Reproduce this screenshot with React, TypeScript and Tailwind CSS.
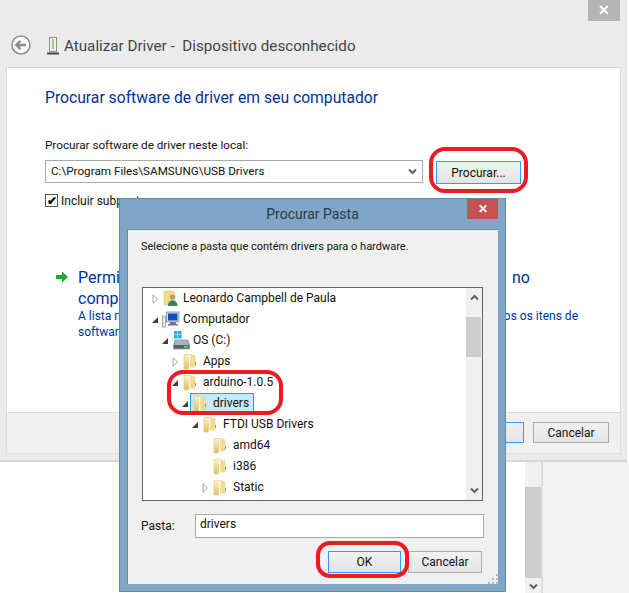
import React from "react";

const FONT = "font-['Roboto','Noto_Sans',sans-serif]";

function Folder() {
  return (
    <svg width="16" height="17" viewBox="0 0 16 17" className="shrink-0">
      <defs>
        <linearGradient id="fg" x1="0" y1="0" x2="0" y2="1">
          <stop offset="0" stopColor="#fdf3c4" />
          <stop offset="1" stopColor="#e3bf63" />
        </linearGradient>
      </defs>
      <path d="M1 1.5h7l4 1.5v11H6l-1 2H1z" fill="url(#fg)" stroke="#e2c87e" strokeWidth="0.6" />
      <path d="M6 2.5l1.5-1v13.2L6 16z" fill="#fffbe6" />
      <path d="M7.5 2.5H12V14H7.5z" fill="#f3da8c" />
      <rect x="12" y="9" width="1" height="3" fill="#5aa7e0" />
    </svg>
  );
}

function UserFolder() {
  return (
    <svg width="16" height="17" viewBox="0 0 16 17" className="shrink-0">
      <path d="M1 1h8l3 1.5V15H1z" fill="#f2d988" stroke="#e2c87e" strokeWidth="0.6" />
      <circle cx="9.5" cy="7" r="2.6" fill="#b89a78" />
      <path d="M5 16c0-4 2-5.5 4.5-5.5S14.500 12 14.500 16z" fill="#3f7f68" />
    </svg>
  );
}

function Computer() {
  return (
    <svg width="18" height="17" viewBox="0 0 18 17" className="shrink-0">
      <rect x="0.500" y="5" width="3" height="11" fill="#e8e8e8" stroke="#8a8a8a" strokeWidth="0.7" />
      <rect x="4.500" y="1" width="12.500" height="10" fill="#d8dde2" stroke="#77828c" strokeWidth="0.7" />
      <rect x="6" y="2.500" width="9.500" height="7" fill="#0b4fc4" />
      <path d="M8 11h6v2h2v1.500H6V13h2z" fill="#70777f" />
    </svg>
  );
}

function Drive() {
  return (
    <svg width="17" height="19" viewBox="0 0 17 19" className="shrink-0">
      <rect x="1" y="0" width="3.500" height="3.500" fill="#12b5ee" />
      <rect x="5" y="0" width="3.500" height="3.500" fill="#12b5ee" />
      <rect x="1" y="4" width="3.500" height="3.500" fill="#12b5ee" />
      <rect x="5" y="4" width="3.500" height="3.500" fill="#12b5ee" />
      <path d="M2 9h13l1.500 5v4H.5v-4z" fill="#a9b2ba" stroke="#6c757d" strokeWidth="0.6" />
      <rect x="1" y="14" width="15" height="3.500" fill="#56606a" />
      <rect x="11" y="15" width="4" height="1.500" fill="#5fe06a" />
    </svg>
  );
}

function OpenArrow() {
  return (
    <svg width="8" height="8" viewBox="0 0 8 8" className="shrink-0">
      <path d="M7 1v6H1z" fill="#404040" />
    </svg>
  );
}

function ClosedArrow() {
  return (
    <svg width="8" height="10" viewBox="0 0 8 10" className="shrink-0">
      <path d="M2 .8 6.500 5 2 9.200z" fill="#fff" stroke="#a6a6a6" />
    </svg>
  );
}

function Chevron({ up }: { up?: boolean }) {
  return (
    <svg width="9" height="7" viewBox="0 0 9 7" className="shrink-0">
      <path d={up ? "M1 5.500 4.500 2 8 5.500" : "M1 1.500 4.500 5 8 1.500"} fill="none" stroke="#606060" strokeWidth="2" />
    </svg>
  );
}

type Row = {
  label: string;
  pad: string;
  arrow?: "open" | "closed";
  icon: "folder" | "user" | "pc" | "drive";
  selected?: boolean;
};

const rows: Row[] = [
  { label: "Leonardo Campbell de Paula", pad: "pl-[8px]", arrow: "closed", icon: "user" },
  { label: "Computador", pad: "pl-[8px]", arrow: "open", icon: "pc" },
  { label: "OS (C:)", pad: "pl-[18px]", arrow: "open", icon: "drive" },
  { label: "Apps", pad: "pl-[28px]", arrow: "closed", icon: "folder" },
  { label: "arduino-1.0.5", pad: "pl-[28px]", arrow: "open", icon: "folder" },
  { label: "drivers", pad: "pl-[38px]", arrow: "open", icon: "folder", selected: true },
  { label: "FTDI USB Drivers", pad: "pl-[48px]", arrow: "open", icon: "folder" },
  { label: "amd64", pad: "pl-[58px]", icon: "folder" },
  { label: "i386", pad: "pl-[58px]", icon: "folder" },
  { label: "Static", pad: "pl-[58px]", arrow: "closed", icon: "folder" },
];

function TreeRow({ row }: { row: Row }) {
  return (
    <div className={`flex h-[21px] items-center ${row.pad}`}>
      <span className="flex w-[8px] shrink-0 items-center justify-center">
        {row.arrow === "open" && <OpenArrow />}
        {row.arrow === "closed" && <ClosedArrow />}
      </span>
      <span
        className={`ml-[1px] flex h-[21px] items-center border pl-[2px] pr-[4px] ${
          row.selected ? "border-[#26a0da] bg-[#cbe8f6]" : "border-transparent"
        }`}
      >
        <span className="flex w-[16px] shrink-0 items-center justify-center">
          {row.icon === "folder" && <Folder />}
          {row.icon === "user" && <UserFolder />}
          {row.icon === "pc" && <Computer />}
          {row.icon === "drive" && <Drive />}
        </span>
        <span className="ml-[4px] -mt-[2px] whitespace-nowrap text-[12px] text-[#111]">{row.label}</span>
      </span>
    </div>
  );
}

function Btn({ children, focus, className = "" }: { children?: React.ReactNode; focus?: boolean; className?: string }) {
  return (
    <div
      className={`flex items-center justify-center border bg-gradient-to-b from-[#f1f1f1] to-[#e4e4e4] text-[12px] text-[#111] ${
        focus ? "border-[#3399ff]" : "border-[#acacac]"
      } ${className}`}
    >
      {children}
    </div>
  );
}

function BackWindow() {
  return (
    <div className="flex h-[462px] w-[627px] flex-col border-b-2 border-[#d8d8d8] bg-[#ebebeb] px-[6px] pb-[6px]">
      <div className="flex h-[21px] justify-end pr-[1px]">
        <div className="flex h-[21px] w-[32px] items-center justify-center bg-[#b4b4b4] text-[14px] font-bold text-white">
          ✕
        </div>
      </div>
      <div className="flex h-[46px] items-start pt-[13px]">
        <svg width="22" height="22" viewBox="0 0 22 22" className="ml-[4px] shrink-0">
          <circle cx="11" cy="11" r="9" fill="#fafafa" stroke="#909090" strokeWidth="1.600" />
          <path d="M6 11h10M10.500 6.800 6.300 11l4.200 4.200" fill="none" stroke="#8a8a8a" strokeWidth="2.400" />
        </svg>
        <svg width="12" height="18" viewBox="0 0 12 18" className="ml-[15px] mt-[3px] shrink-0">
          <rect x="2.500" y="0.500" width="7" height="14" fill="#f0f0f0" stroke="#8c8c8c" />
          <rect x="5" y="2" width="2" height="10" fill="#8fd07a" />
          <rect x="0" y="15.500" width="12" height="2" fill="#444" />
        </svg>
        <span className="ml-[5px] mt-[1px] whitespace-pre text-[15.200px] leading-[22px] text-[#444]">
          Atualizar Driver -  Dispositivo desconhecido
        </span>
      </div>
      <div className="flex flex-1 flex-col border border-[#dcdcdc] bg-white">
        <div className="flex-1 pl-[38px] pt-[20px]">
          <div className="h-[20px] text-[15.700px] leading-[20px] text-[#003399]">
            Procurar software de driver em seu computador
          </div>
          <div className="mt-[29px] h-[16px] text-[11.700px] leading-[16px] text-[#111]">
            Procurar software de driver neste local:
          </div>
          <div className="mt-[7px] flex h-[24px] items-start">
            <div className="flex h-[23px] w-[378px] items-center justify-between border border-[#a9a9a9] px-[5px] text-[11.700px] text-[#111]">
              <span>C:\Program Files\SAMSUNG\USB Drivers</span>
              <Chevron />
            </div>
            <Btn focus className="ml-[13px] mt-[1px] h-[23px] w-[85px]">Procurar...</Btn>
          </div>
          <div className="mt-[10px] flex h-[13px] items-center">
            <span className="flex h-[13px] w-[13px] items-center justify-center border border-[#555] text-[12px] font-bold leading-none text-black">
              ✔
            </span>
            <span className="ml-[3px] text-[12px] text-[#111]">Incluir subpastas</span>
          </div>
          <div className="mt-[60px] flex">
            <svg width="14" height="14" viewBox="0 0 14 14" className="ml-[10px] mt-[3px] shrink-0">
              <path d="M1 5h6V1.500L13 7l-6 5.500V9H1z" fill="#12ad2b" />
            </svg>
            <div className="ml-[9px] w-[500px]">
              <div className="flex h-[21px] w-[452px] justify-between text-[16px] leading-[21px] text-[#003399]">
                <span>Permitir</span>
                <span>no</span>
              </div>
              <div className="h-[20px] text-[16px] leading-[21px] text-[#003399]">computador</div>
              <div className="flex h-[16px] w-[500px] justify-between text-[12px] leading-[16px] text-[#003399]">
                <span>A lista mostrará</span>
                <span>os os itens de</span>
              </div>
              <div className="h-[16px] text-[12px] leading-[16px] text-[#003399]">software</div>
            </div>
          </div>
        </div>
        <div className="flex h-[41px] items-start justify-end gap-[9px] border-t border-[#dcdcdc] bg-[#f0f0f0] pr-[11px] pt-[9px]">
          <Btn focus className="h-[21px] w-[76px]" />
          <Btn className="h-[21px] w-[76px]">Cancelar</Btn>
        </div>
      </div>
    </div>
  );
}

function Dialog() {
  return (
    <div className="absolute left-[119px] top-[198px] flex h-[394px] w-[387px] flex-col border border-[#668aa6] bg-[#7fa6c6] px-[7px] pb-[7px]">
      <div className="relative flex h-[30px] shrink-0 items-center justify-center text-[14px] text-[#2b3a46]">
        Procurar Pasta
        <div className="absolute right-0 top-0 flex h-[20px] w-[31px] items-center justify-center bg-[#c75050] text-[12px] font-bold text-white">
          ✕
        </div>
      </div>
      <div className="relative flex flex-1 flex-col border-l border-t border-[#668aa6] bg-[#f0f0f0] pl-[14px]">
        <div className="-ml-px mt-[8px] h-[17px] text-[11px] leading-[17px] text-[#111]">
          Selecione a pasta que contém drivers para o hardware.
        </div>
        <div className="mt-[32px] flex h-[214px] w-[341px] border border-[#646464] bg-white">
          <div className="flex-1">
            {rows.map((r) => (
              <TreeRow key={r.label} row={r} />
            ))}
          </div>
          <div className="flex w-[16px] flex-col items-center justify-between bg-[#f0f0f0] py-[6px]">
            <Chevron up />
            <div className="absolute left-[338px] top-[87px] h-[40px] w-[15px] bg-[#cdcdcd]" />
            <Chevron />
          </div>
        </div>
        <div className="-ml-px mt-[13px] flex items-start">
          <span className="mt-[3px] w-[54px] text-[12px] leading-[18px] text-[#111]">Pasta:</span>
          <div className="h-[24px] w-[289px] border border-[#aaaaaa] bg-white pl-[4px] text-[12px] leading-[18px] text-[#111]">
            drivers
          </div>
        </div>
        <div className="mt-[13px] flex justify-end gap-[7px] pr-[16px]">
          <Btn focus className="h-[22px] w-[73px]">OK</Btn>
          <Btn className="h-[22px] w-[74px]">Cancelar</Btn>
        </div>
        <svg width="10" height="10" viewBox="0 0 10 10" className="absolute bottom-0 right-0">
          <path d="M8 0h2v2H8zM4 4h2v2H4zM8 4h2v2H8zM0 8h2v2H0zM4 8h2v2H4zM8 8h2v2H8z" fill="#b8b8b8" />
        </svg>
      </div>
    </div>
  );
}

export default function App() {
  return (
    <div className={`relative h-[593px] w-[629px] overflow-hidden bg-white ${FONT}`}>
      <BackWindow />
      <div className="flex h-[131px] justify-end">
        <div className="flex w-[16px] flex-col items-center bg-[#f0f0f0]">
          <div className="mt-[25px] h-[91px] w-full bg-[#cdcdcd]" />
          <div className="mt-[5px]">
            <Chevron />
          </div>
        </div>
        <div className="w-[88px] border-l-2 border-[#dcdcdc] bg-[#f2f2f2]" />
      </div>
      <Dialog />
      <div className="pointer-events-none absolute left-[429px] top-[147px] h-[46px] w-[99px] rounded-[16px] border-[4px] border-[#ed1c24]" />
      <div className="pointer-events-none absolute left-[167px] top-[370px] h-[45px] w-[116px] rounded-[16px] border-[4px] border-[#ed1c24]" />
      <div className="pointer-events-none absolute left-[316px] top-[541px] h-[37px] w-[93px] rounded-[14px] border-[4px] border-[#ed1c24]" />
    </div>
  );
}
